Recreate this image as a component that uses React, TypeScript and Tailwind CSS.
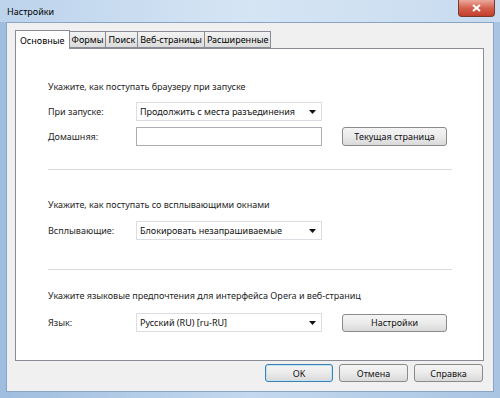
import type { JSX } from "react";

const font = { fontFamily: '"Noto Sans", "Liberation Sans", sans-serif' };

function Select({ value }: { value: string }): JSX.Element {
  return (
    <div className="flex h-[19px] w-[186px] items-center justify-between border border-[#dcdde2] bg-white pl-[3px] pr-[5px] text-[#111]">
      <span className="whitespace-nowrap">{value}</span>
      <svg width="7" height="4" viewBox="0 0 7 4">
        <path d="M0 0h7L3.5 4z" fill="#111" />
      </svg>
    </div>
  );
}

function Button({ label, primary }: { label: string; primary?: boolean }): JSX.Element {
  return (
    <div
      className={`flex h-full items-center justify-center whitespace-nowrap rounded-[3px] border bg-gradient-to-b from-[#f4f4f4] via-[#ebebeb] to-[#d9d9d9] text-[#111] ${
        primary ? "border-[#3c7fb1] shadow-[inset_0_0_0_1px_#bfe3f7]" : "border-[#8a8a8a]"
      }`}
    >
      {label}
    </div>
  );
}

const tabs = ["Основные", "Формы", "Поиск", "Веб-страницы", "Расширенные"];

export default function App(): JSX.Element {
  return (
    <div
      style={font}
      className="flex h-[398px] w-[500px] flex-col overflow-hidden bg-gradient-to-r from-[#9fbddf] via-[#c4d9ef] to-[#a9c4e2] text-[9px] leading-[11px]"
    >
      {/* title bar */}
      <div className="relative flex h-[22px] items-center bg-gradient-to-r from-[#bcd3ec] via-[#d6e5f4] to-[#c8dbef] pl-[7px] text-[9px] text-black">
        Настройки
        <div className="absolute right-[5px] top-0 flex h-[17px] w-[37px] items-center justify-center rounded-b-[4px] border border-t-0 border-[#7a3a30] bg-gradient-to-b from-[#e9a99c] via-[#d5604e] to-[#c23e2c]">
          <svg width="9" height="8" viewBox="0 0 9 8">
            <path d="M1 1l7 6M8 1L1 7" stroke="#fff" strokeWidth="2" />
          </svg>
        </div>
      </div>

      {/* client area */}
      <div className="mx-[6px] mb-[6px] flex flex-1 flex-col border border-[#8aa4c4] bg-[#f0f0f0] pl-[8px] pr-[8px]">
        {/* tabs */}
        <div className="mt-[8px] flex h-[17px] items-end whitespace-nowrap">
          {tabs.map((t, i) =>
            i === 0 ? (
              <div
                key={t}
                className="relative z-10 -mb-px flex h-[19px] items-center border border-b-0 border-[#898c95] bg-white px-[4px] text-black"
              >
                {t}
              </div>
            ) : (
              <div
                key={t}
                className="-ml-px flex h-[17px] items-center border border-[#898c95] bg-gradient-to-b from-[#f2f2f2] to-[#dcdcdc] px-[2px] text-black"
              >
                {t}
              </div>
            ),
          )}
        </div>

        {/* panel */}
        <div className="flex h-[313px] w-[469px] flex-col whitespace-nowrap border border-[#898c95] bg-white pl-[32px] pr-[31px] text-[#1e1e1e]">
          <div className="mt-[32px] h-[11px]">Укажите, как поступать браузеру при запуске</div>
          <div className="mt-[10px] flex items-center">
            <span className="w-[88px]">При запуске:</span>
            <Select value="Продолжить с места разъединения" />
          </div>
          <div className="mt-[6px] flex items-center">
            <span className="w-[88px]">Домашняя:</span>
            <div className="h-[19px] w-[186px] border border-[#abadb3] bg-white" />
            <div className="ml-[20px] h-[19px] w-[105px]">
              <Button label="Текущая страница" />
            </div>
          </div>
          <div className="mt-[23px] h-px bg-[#dadada]" />

          <div className="mt-[29px] h-[11px]">Укажите, как поступать со всплывающими окнами</div>
          <div className="mt-[11px] flex items-center">
            <span className="w-[88px]">Всплывающие:</span>
            <Select value="Блокировать незапрашиваемые" />
          </div>
          <div className="mt-[29px] h-px bg-[#dadada]" />

          <div className="mt-[20px] h-[11px]">Укажите языковые предпочтения для интерфейса Opera и веб-страниц</div>
          <div className="mt-[12px] flex items-center">
            <span className="w-[88px]">Язык:</span>
            <Select value="Русский (RU) [ru-RU]" />
            <div className="ml-[20px] h-[18px] w-[105px]">
              <Button label="Настройки" />
            </div>
          </div>
        </div>

        {/* dialog buttons */}
        <div className="mt-[3px] flex justify-end gap-[6px] pr-[2px]">
          <div className="h-[18px] w-[68px]">
            <Button label="OK" primary />
          </div>
          <div className="h-[18px] w-[69px]">
            <Button label="Отмена" />
          </div>
          <div className="h-[18px] w-[69px]">
            <Button label="Справка" />
          </div>
        </div>
      </div>
    </div>
  );
}
